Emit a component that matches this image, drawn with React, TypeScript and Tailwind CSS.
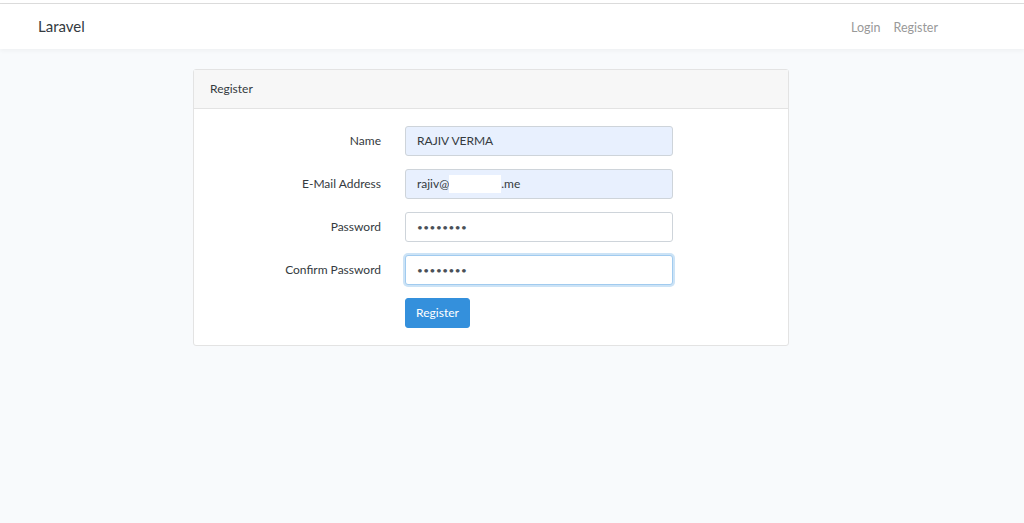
import React from 'react';

const font = { fontFamily: 'Lato, "Open Sans", sans-serif' };

function Row({ label, children }: { label: string; children: React.ReactNode }) {
  return (
    <div className="flex items-center h-[30px] mb-[13px]">
      <label className="w-[207px] text-right pr-[24px] text-[12px] text-[#343a40]">{label}</label>
      {children}
    </div>
  );
}

export default function App() {
  return (
    <div className="min-h-[523px] bg-[#f8fafc] text-[#212529]" style={font}>
      <div className="h-[4px] bg-white border-b border-[#dcdcdc]" />
      <nav className="h-[45px] bg-white shadow-[0_2px_4px_rgba(0,0,0,0.04)] flex items-center justify-between pl-[38px] pr-[86px]">
        <span className="text-[15px] text-[#343a40]">Laravel</span>
        <div className="flex gap-[13px] pt-[3px] text-[12.5px] text-[#999]">
          <a>Login</a>
          <a>Register</a>
        </div>
      </nav>

      <div className="pt-[20px] flex justify-center">
        <div className="w-[596px] ml-[-42px] bg-white border border-[#e3e3e3] rounded-[3px]">
          <div className="h-[39px] bg-[#f7f7f7] border-b border-[#e3e3e3] flex items-center px-[16px] text-[12px] text-[#343a40]">
            Register
          </div>
          <div className="pt-[17px] pb-[17px] px-[4px]">
            <Row label="Name">
              <div className="w-[268px] h-[30px] rounded-[3px] border border-[#ced4da] bg-[#e8f0fe] flex items-center px-[11px] text-[12px] text-[#343a40]">
                RAJIV VERMA
              </div>
            </Row>
            <Row label="E-Mail Address">
              <div className="w-[268px] h-[30px] rounded-[3px] border border-[#ced4da] bg-[#e8f0fe] flex items-center px-[11px] text-[12px] text-[#343a40]">
                <span>rajiv@</span>
                <span className="inline-block w-[52px] h-[18px] bg-white" />
                <span>.me</span>
              </div>
            </Row>
            <Row label="Password">
              <div className="w-[268px] h-[30px] rounded-[3px] border border-[#ced4da] bg-white flex items-center px-[11px] text-[10px] tracking-[0.5px] text-[#495057]">
                ••••••••
              </div>
            </Row>
            <Row label="Confirm Password">
              <div className="w-[268px] h-[30px] rounded-[3px] border border-[#a1cbef] bg-white shadow-[0_0_0_2px_rgba(52,144,220,0.25)] flex items-center px-[11px] text-[10px] tracking-[0.5px] text-[#495057]">
                ••••••••
              </div>
            </Row>
            <div className="flex">
              <div className="w-[207px]" />
              <button className="h-[30px] w-[65px] rounded-[3px] bg-[#3490dc] border border-[#3490dc] text-white text-[12px]">
                Register
              </button>
            </div>
          </div>
        </div>
      </div>
    </div>
  );
}
